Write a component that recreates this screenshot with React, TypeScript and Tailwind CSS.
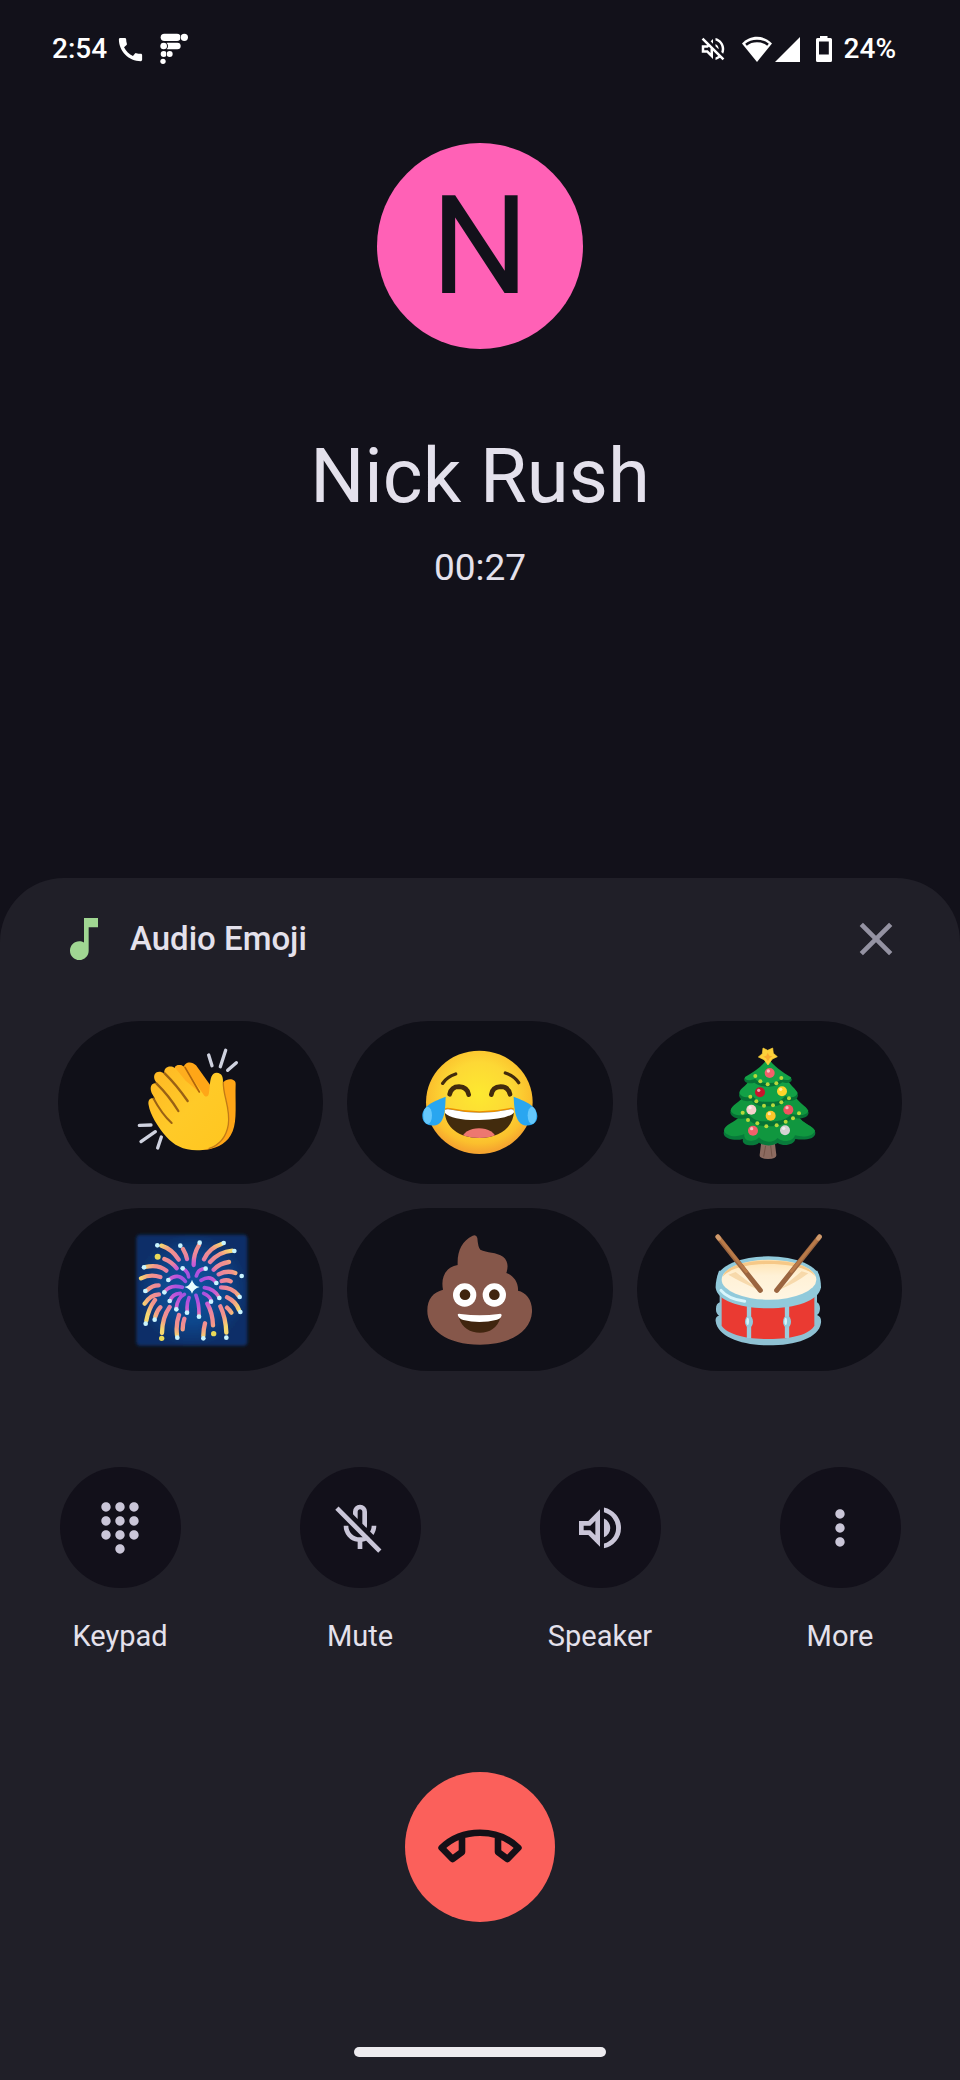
import React, { useState } from 'react'
import { MdCall, MdClose, MdDialpad, MdMoreVert, MdMusicNote, MdOutlineVolumeOff } from 'react-icons/md'

interface AudioEmoji {
  id: string
  label: string
  drawing: React.ReactNode
}

interface CallControl {
  id: string
  label: string
  icon: React.ReactNode
}

/* ---------- Status bar icons ---------- */

const NotificationIcon: React.FC = () => (
  <svg viewBox="480 99 87 96" className="h-8 w-[29px]" fill="white" aria-hidden="true">
    <rect x="482" y="101" width="60" height="22" rx="11" />
    <circle cx="553" cy="112" r="13" fill="#12111a" />
    <circle cx="553" cy="112" r="11" />
    <rect x="493" y="128" width="49" height="20" rx="10" />
    <circle cx="491" cy="138" r="13" fill="#12111a" />
    <circle cx="491" cy="138" r="10" />
    <circle cx="491" cy="162" r="9" />
    <circle cx="509" cy="162" r="11" fill="#12111a" />
    <circle cx="509" cy="162" r="9" />
    <circle cx="489" cy="184" r="8" />
  </svg>
)

const WifiIcon: React.FC = () => (
  <svg viewBox="0 0 30 26" className="h-[26px] w-[30px]" aria-hidden="true">
    <path d="M0 7.5C8-1.5 22-1.5 30 7.5L15 26Z" fill="white" />
    <path d="M4 8.8C10 3.8 20 3.8 26 8.8" fill="none" stroke="#12111a" strokeWidth="2.6" />
  </svg>
)

const SignalIcon: React.FC = () => (
  <svg viewBox="0 0 25 26" className="h-[26px] w-[25px]" aria-hidden="true">
    <path d="M25 1V26H0Z" fill="white" />
  </svg>
)

const BatteryIcon: React.FC = () => (
  <svg viewBox="0 0 16 26" className="h-[26px] w-4" aria-hidden="true">
    <path d="M4 0H11.5V2H14.5Q16 2 16 3.5V24.5Q16 26 14.5 26H1.5Q0 26 0 24.5V3.5Q0 2 1.5 2H4Z" fill="white" />
    <path d="M3 5.5H12.8V18.5H3Z" fill="#12111a" />
  </svg>
)

/* ---------- Call icons ---------- */

const MicOffIcon: React.FC = () => (
  <svg viewBox="0 -960 960 960" className="size-14" fill="currentColor" aria-hidden="true">
    <path d="M710-362l-58-58q14-23 21-48t7-52h80q0 44-13 83.5T710-362ZM592-482l-72-72v-206q0-17-11.5-28.5T480-800q-17 0-28.5 11.5T440-760v126l-80-80v-46q0-50 35-85t85-35q50 0 85 35t35 85v240q0 11-2.5 20t-5.5 18ZM440-120v-123q-104-14-172-93t-68-184h80q0 83 57.5 141.5T480-320q34 0 64.5-10.5T600-360l57 57q-29 23-63.5 39T520-243v123h-80Zm352 64L56-792l56-56 736 736-56 56Z" />
  </svg>
)

const SpeakerIcon: React.FC = () => (
  <svg viewBox="0 -960 960 960" className="size-14" fill="currentColor" aria-hidden="true">
    <path d="M548-131v-82q94-26 151-100t57-168q0-94-57-168T548-749v-82q128 28 210 125.5T840-481q0 127-82 224.5T548-131ZM120-360v-240h160l200-200v640L280-360H120Zm428 40v-322q51 22 79.500 66t28.500 96q0 51-28.500 94.500T548-320ZM400-606l-86 86H200v80h114l86 86v-252Z" />
  </svg>
)

const HangUpIcon: React.FC = () => (
  <svg viewBox="0 0 84 36" className="h-9 w-[84px]" fill="none" stroke="#141017" strokeWidth="6.6" strokeLinejoin="round" aria-hidden="true">
    <path d="M24 7V23L14.5 30L3.6 18.8Q19 3.7 42 3.7T80.4 18.8L69.5 30L60 23V7" />
  </svg>
)

/* ---------- Emoji drawings ---------- */

const ClapEmoji: React.FC = () => (
  <svg viewBox="242 97 360 360" className="size-[120px]" aria-hidden="true">
    <defs>
      <linearGradient id="clapFront" x1="0" y1="0" x2="1" y2="1">
        <stop offset="0" stopColor="#ffb624" />
        <stop offset=".5" stopColor="#ffca28" />
        <stop offset="1" stopColor="#ffc61f" />
      </linearGradient>
    </defs>
    <path d="M399 172C402 153 424 150 437 164L479 222L490 275L440 255Z" fill="#ffa617" />
    <path d="M520 214C530 202 557 203 556 220C554 275 561 328 547 362C533 396 505 412 470 417L440 417L505 340Z" fill="#ffa617" />
    <path d="M478 228C480 202 484 186 499 186C515 187 519 199 518 217C518 253 542 290 535 340C527 391 487 419 440 419C398 418 370 403 348 378C322 350 299 310 295 284C291 266 303 258 315 266L304 247C296 226 306 214 320 219L313 207C306 187 324 176 342 189C339 169 360 162 373 172C378 160 394 160 404 172L462 255Q473 263 476 246Z" fill="url(#clapFront)" />
    <path d="M373 170C382 160 395 160 404 172L450 248Q425 225 406 210Z" fill="#ffae1e" />
    <path d="M404 170L447 244" fill="none" stroke="#b0650c" strokeWidth="5" strokeLinecap="round" />
    <path d="M519 213C517 255 541 290 534 342C527 384 503 405 475 414" fill="none" stroke="#c27a16" strokeWidth="4" />
    <g fill="none" stroke="#996114" strokeLinecap="round">
      <path d="M343 188Q378 222 412 271" strokeWidth="7" />
      <path d="M318 218Q356 255 384 301" strokeWidth="7" />
      <path d="M310 264Q334 309 364 337" strokeWidth="6" />
    </g>
    <path d="M475 133L485 165M526 119L510 168M558 156L532 179M267 344L302 343M272 393L315 363M333 379L322 412" stroke="#cfd2df" strokeWidth="10" strokeLinecap="round" />
  </svg>
)

const JoyEmoji: React.FC = () => (
  <svg viewBox="240 97 360 360" className="size-[120px]" aria-hidden="true">
    <defs>
      <radialGradient id="joyFace" cx=".5" cy=".42" r=".56">
        <stop offset="0" stopColor="#fde930" />
        <stop offset=".55" stopColor="#fdd835" />
        <stop offset=".85" stopColor="#fbc02d" />
        <stop offset="1" stopColor="#f6a52f" />
      </radialGradient>
      <clipPath id="joyMouth">
        <path d="M314 302Q314 294 325 296Q418 316 511 296Q522 294 522 302C520 350 480 382 418 382S316 350 314 302Z" />
      </clipPath>
    </defs>
    <ellipse cx="418" cy="275" rx="160" ry="155" fill="url(#joyFace)" />
    <g fill="none" stroke="#422b0d" strokeLinecap="round">
      <path d="M308 218Q321 198 347 190M496 187Q523 196 536 216" strokeWidth="10" />
      <path d="M329 251Q334 228 357 228Q382 229 386 252M454 252Q457 229 482 228Q505 228 510 251" strokeWidth="14" />
    </g>
    <path d="M317 295Q321 293 325 294Q418 314 511 294Q515 293 519 295" fill="none" stroke="#eb8f00" strokeWidth="5" strokeLinecap="round" />
    <g clipPath="url(#joyMouth)">
      <rect x="310" y="290" width="215" height="95" fill="#422b0d" />
      <path d="M314 290H522V306Q500 327 418 328T314 306Z" fill="white" />
      <ellipse cx="417" cy="384" rx="50" ry="31" fill="#ed7770" />
    </g>
    <path d="M317 258C316 292 314 318 303 333C290 351 248 350 247 317C246 283 288 270 317 258Z" fill="#29a6f0" />
    <path d="M521 258C522 292 526 318 537 333C550 351 591 350 592 317C592 283 550 270 521 258Z" fill="#29a6f0" />
    <ellipse cx="263" cy="314" rx="13" ry="26" fill="#65c8fb" />
    <ellipse cx="576" cy="314" rx="13" ry="26" fill="#65c8fb" />
  </svg>
)

const treeLights = [
  [377, 196], [392, 212], [414, 221], [440, 218], [455, 202],
  [362, 258], [380, 272], [403, 285], [430, 284], [455, 275], [478, 263],
  [339, 306], [355, 328], [383, 338], [410, 347], [441, 344], [468, 333], [490, 323], [508, 308],
]

const treeBaubles = [
  { x: 420, y: 187, color: '#f2606a' },
  { x: 391, y: 245, color: '#c9142c' },
  { x: 457, y: 242, color: '#fbd52b' },
  { x: 365, y: 297, color: '#f5d0cc' },
  { x: 476, y: 297, color: '#f2525f' },
  { x: 423, y: 315, color: '#fbc72b' },
  { x: 370, y: 360, color: '#f2606a' },
  { x: 466, y: 359, color: '#d5d2d4' },
]

const TreeEmoji: React.FC = () => (
  <svg viewBox="238 97 360 360" className="size-[120px]" aria-hidden="true">
    <path d="M396 385H434L440 432Q442 444 415 445Q388 444 390 432Z" fill="#8d6b60" />
    <path d="M408 405L402 438M423 405L427 438" stroke="#735347" strokeWidth="3" />
    {/* Branches, bottom to top */}
    <path d="M332 318C315 340 284 345 282 366C281 387 322 391 340 385C333 407 376 409 388 396C402 407 430 407 444 397C462 409 495 402 497 385C522 389 558 387 557 366C555 345 520 340 505 318Z" fill="#087a3a" />
    <path d="M332 315C315 336 284 341 283 360C290 378 322 381 344 370C340 395 376 396 388 380C402 397 432 397 444 382C462 398 490 392 496 374C520 381 550 378 556 360C550 345 520 340 505 315Z" fill="#10973f" />
    <path d="M345 255C332 278 302 288 302 306C306 325 336 326 354 322C372 348 402 346 418 346C440 349 474 340 487 322C512 326 535 322 537 306C533 289 506 278 492 255Z" fill="#067335" />
    <path d="M345 252C332 275 303 283 303 300C312 317 338 316 356 309C375 335 402 332 418 332C440 334 470 329 485 310C510 316 533 314 536 300C530 286 506 275 492 252Z" fill="#10973f" />
    <path d="M362 205C355 230 329 237 328 254C331 273 352 273 366 270C382 289 398 287 415 287C437 289 455 285 467 269C486 274 504 269 505 254C503 238 480 230 472 205Z" fill="#067335" />
    <path d="M362 202C355 225 330 232 329 247C337 263 354 262 369 255C384 276 400 273 415 273C437 275 455 272 466 256C485 263 500 260 504 247C499 234 480 225 472 202Z" fill="#12a146" />
    <path d="M415 145C397 170 375 185 344 202C340 218 360 220 374 216C388 226 400 227 415 228C432 229 448 223 458 215C475 220 489 214 486 204C458 187 432 170 415 145Z" fill="#067335" />
    <path d="M415 142C397 167 375 182 346 199C344 210 360 211 376 204C390 217 400 217 415 217C432 218 446 214 456 205C471 211 487 207 484 200C458 184 432 167 415 142Z" fill="#12a146" />
    {treeLights.map(([x, y]) => (
      <circle key={`${x}-${y}`} cx={x} cy={y} r="6" fill="#b7d83c" />
    ))}
    {treeBaubles.map(({ x, y, color }) => (
      <g key={`${x}-${y}`}>
        <circle cx={x} cy={y} r="15" fill={color} />
        <circle cx={x - 4} cy={y - 6} r="5" fill="white" opacity=".6" />
      </g>
    ))}
    <path d="M400 112L414 119L429 112L431 128L443 138L428 145L415 163L403 147L386 139L398 129Z" fill="#fdd13a" stroke="#fdd13a" strokeWidth="2" strokeLinejoin="round" />
    <path d="M414 126L419 135L428 137L420 143L415 152L409 143L401 138L410 135Z" fill="#f79329" opacity=".6" />
  </svg>
)

const FireworksEmoji: React.FC = () => (
  <svg viewBox="242 88 360 360" className="size-[120px]" aria-hidden="true">
    <defs>
      <radialGradient id="nightSky">
        <stop offset="0" stopColor="#0c559f" />
        <stop offset=".6" stopColor="#0b458a" />
        <stop offset="1" stopColor="#0b2f68" />
      </radialGradient>
      <radialGradient id="sparks" gradientUnits="userSpaceOnUse" cx="425" cy="258" r="165">
        <stop offset="0" stopColor="#7a5be6" />
        <stop offset=".3" stopColor="#b550dc" />
        <stop offset=".45" stopColor="#cf62cf" />
        <stop offset=".55" stopColor="#ea839f" />
        <stop offset=".78" stopColor="#f3958a" />
        <stop offset=".95" stopColor="#f6d870" />
      </radialGradient>
      <filter id="skyEdge" x="-10%" y="-10%" width="120%" height="120%">
        <feGaussianBlur stdDeviation="4" />
      </filter>
    </defs>
    <rect x="258" y="102" width="333" height="333" rx="12" fill="url(#nightSky)" filter="url(#skyEdge)" />
    <g fill="none" stroke="url(#sparks)" strokeLinecap="round">
      {/* Outer trails */}
      <path strokeWidth="13" d="M333 135Q365 145 385 177M342 175Q365 184 379 203M284 199Q325 190 348 210M272 233Q300 219 330 229M290 269Q305 254 325 254M283 309Q300 282 326 281M288 360Q294 325 314 298M335 397Q336 350 358 319M380 404Q376 370 386 343M397 386Q397 368 402 354M459 405Q459 387 464 368M528 396Q526 350 510 317M488 374Q487 338 471 309M543 336Q538 328 530 321M566 328Q556 302 530 290M564 284Q546 260 512 260M541 242Q530 236 514 241M555 217Q530 208 505 221M536 184Q508 188 490 207M546 150Q507 153 479 184M514 130Q476 142 461 176M446 133Q429 161 430 193M398 145Q408 162 410 175M315 348Q320 330 330 320" />
      {/* Inner trails */}
      <path strokeWidth="11" d="M355 238Q382 214 405 242M397 203Q414 213 415 229M465 204Q443 205 438 226M496 245Q480 222 452 239M343 273Q360 250 396 260M360 300Q365 280 390 278M378 322Q382 290 402 281M411 332Q408 310 416 291M446 345Q447 310 437 284M483 300Q477 285 460 278M507 291Q492 264 462 261" />
    </g>
    <g fill="#c8f4ff">
      {[
        [321, 134], [390, 135], [448, 126], [520, 127], [552, 151], [574, 226], [568, 289], [570, 334],
        [528, 411], [459, 413], [381, 411], [286, 369], [313, 357], [285, 271], [281, 200], [354, 238],
        [397, 203], [466, 204], [498, 247], [507, 292], [482, 303], [446, 348], [410, 336], [378, 326],
        [358, 301], [342, 275],
      ].map(([cx, cy]) => (
        <circle key={`${cx}-${cy}`} cx={cx} cy={cy} r="7" />
      ))}
    </g>
    <circle cx="322" cy="168" r="9" fill="#eada58" />
    <circle cx="334" cy="413" r="8" fill="#eada58" />
    <circle cx="490" cy="399" r="8" fill="#eada58" />
    <path d="M425 237Q430 255 448 259Q430 264 425 279Q420 264 402 259Q420 255 425 237Z" fill="#e8fdff" />
  </svg>
)

const PoopEmoji: React.FC = () => (
  <svg viewBox="240 88 360 360" className="size-[120px]" aria-hidden="true">
    <path d="M398 105Q409 100 412 112Q414 140 421 147C440 157 470 154 489 168C505 180 505 200 499 217C520 224 536 244 534 270C558 275 578 298 576 334C573 390 515 432 420 432C320 432 262 386 262 330C262 293 280 275 309 267C302 232 315 200 353 193C351 150 366 121 398 105Z" fill="#86574a" />
    <circle cx="374" cy="283" r="35" fill="white" />
    <circle cx="463" cy="283" r="35" fill="white" />
    <circle cx="375" cy="282" r="16" fill="#40250f" />
    <circle cx="463" cy="282" r="16" fill="#40250f" />
    <path d="M357 352Q420 372 481 352C472 382 449 396 420 396S366 382 357 352Z" fill="#40250f" />
    <path d="M353 342Q354 338 362 340Q420 348 476 340Q485 337 485 344Q482 355 471 357Q420 371 370 358Q356 354 353 342Z" fill="white" />
  </svg>
)

const DrumEmoji: React.FC = () => (
  <svg viewBox="238 88 360 360" className="size-[120px]" aria-hidden="true">
    <defs>
      <linearGradient id="drumSkin" x1="0" y1="0" x2="0" y2="1">
        <stop offset="0" stopColor="#ffe2ae" />
        <stop offset=".4" stopColor="#fff1d6" />
        <stop offset="1" stopColor="#fff6e3" />
      </linearGradient>
    </defs>
    <path d="M258 362Q256 348 268 345Q258 338 259 324Q259 309 270 305V280H562V305Q571 310 571 324Q570 338 562 343Q576 348 574 366C568 412 498 434 416 434S264 408 258 362Z" fill="#8fc1d3" />
    <path d="M276 285H554V375C540 400 490 415 416 415S292 399 276 375Z" fill="#ea3a32" />
    <path d="M358 300V412M472 300V412" stroke="#9ccbdc" strokeWidth="13" />
    <ellipse cx="358" cy="363" rx="12" ry="18" fill="#92cadc" />
    <ellipse cx="472" cy="363" rx="12" ry="18" fill="#92cadc" />
    <ellipse cx="354" cy="362" rx="4" ry="11" fill="#d4f4fb" />
    <ellipse cx="468" cy="362" rx="4" ry="11" fill="#d4f4fb" />
    <path d="M268 210Q257 240 258 262C264 302 335 323 416 323S567 302 574 260Q574 232 563 210Z" fill="#91cadb" />
    <ellipse cx="416" cy="234" rx="153" ry="67" fill="#91cadb" />
    <ellipse cx="418" cy="237" rx="142" ry="60" fill="url(#drumSkin)" />
    <path d="M279 228C292 190 360 180 418 180S540 190 557 227C535 200 470 190 418 190S302 200 279 228Z" fill="#f6c887" />
    <path d="M318 214L388 268Q335 245 296 222ZM516 212L448 268Q500 246 536 218Z" fill="#f3cf98" opacity=".7" />
    <path d="M274 269Q294 294 345 302" fill="none" stroke="#d9f6fc" strokeWidth="9" strokeLinecap="round" />
    <g fill="none" strokeLinecap="round">
      <path d="M265 109L392 269M569 109L441 269" stroke="#9b6540" strokeWidth="15" />
      <path d="M268 110L350 213M567 110L485 212" stroke="#b97a48" strokeWidth="9" />
      <path d="M264 108L268 113M570 108L566 113" stroke="#cf9a6c" strokeWidth="13" />
    </g>
  </svg>
)

const audioEmojis: AudioEmoji[] = [
  { id: 'clap', label: 'Applause', drawing: <ClapEmoji /> },
  { id: 'joy', label: 'Laughter', drawing: <JoyEmoji /> },
  { id: 'tree', label: 'Christmas', drawing: <TreeEmoji /> },
  { id: 'fireworks', label: 'Fireworks', drawing: <FireworksEmoji /> },
  { id: 'poop', label: 'Poop', drawing: <PoopEmoji /> },
  { id: 'drum', label: 'Drum', drawing: <DrumEmoji /> },
]

const controls: CallControl[] = [
  { id: 'keypad', label: 'Keypad', icon: <MdDialpad className="size-14" /> },
  { id: 'mute', label: 'Mute', icon: <MicOffIcon /> },
  { id: 'speaker', label: 'Speaker', icon: <SpeakerIcon /> },
  { id: 'more', label: 'More', icon: <MdMoreVert className="size-14" /> },
]

const App: React.FC = () => {
  const [active, setActive] = useState<string | null>(null)

  const toggle = (id: string) => {
    setActive(prev => (prev === id ? null : id))
  }

  return (
    <div className="flex min-h-screen flex-col bg-[#12111a] font-['Roboto',sans-serif] text-[#e4e1ec]">
      {/* Status bar */}
      <header className="flex h-[98px] items-center justify-between pr-16 pl-[52px] text-[28px] leading-9 font-medium text-white">
        <div className="flex items-center">
          <span>2:54</span>
          <MdCall className="ml-2 size-[31px]" />
          <span className="ml-3.5">
            <NotificationIcon />
          </span>
        </div>
        <div className="flex items-center">
          <MdOutlineVolumeOff className="mr-3.5 size-[30px]" />
          <WifiIcon />
          <span className="ml-[3px]">
            <SignalIcon />
          </span>
          <span className="mr-3 ml-4">
            <BatteryIcon />
          </span>
          <span>24%</span>
        </div>
      </header>

      {/* Caller */}
      <section className="flex flex-1 flex-col items-center pt-[45px] pb-16">
        <div className="flex size-[206px] items-center justify-center rounded-full bg-[#ff61b6] text-[138px] leading-none text-[#12111a]">
          N
        </div>
        <h1 className="mt-[79px] text-[76px] leading-24">Nick Rush</h1>
        <p className="mt-[22px] text-[37px] leading-11">00:27</p>
      </section>

      {/* Bottom sheet */}
      <main className="rounded-t-[64px] bg-[#201f28] pt-[33px] pb-[23px]">
        <div className="flex items-center px-14">
          <MdMusicNote className="size-14 text-[#a0d692]" />
          <h2 className="ml-[18px] flex-1 text-[33px] leading-10 font-medium">Audio Emoji</h2>
          <button aria-label="Close" className="text-[#9492a2]">
            <MdClose className="size-14" />
          </button>
        </div>

        <div className="mt-[54px] grid grid-cols-3 gap-6 px-[58px]">
          {audioEmojis.map(emoji => (
            <button
              key={emoji.id}
              aria-label={emoji.label}
              className="flex h-[163px] items-center justify-center rounded-full bg-[#101018]"
            >
              {emoji.drawing}
            </button>
          ))}
        </div>

        <div className="mt-24 grid grid-cols-4">
          {controls.map(control => (
            <button
              key={control.id}
              aria-pressed={active === control.id}
              onClick={() => toggle(control.id)}
              className="flex flex-col items-center"
            >
              <span className="flex size-[121px] items-center justify-center rounded-full bg-[#12101a] text-[#cac6d8]">
                {control.icon}
              </span>
              <span className="mt-[30px] text-[29px] leading-9">{control.label}</span>
            </button>
          ))}
        </div>

        <div className="mt-[118px] flex justify-center">
          <button
            aria-label="End call"
            className="flex size-[150px] items-center justify-center rounded-full bg-[#fb605b]"
          >
            <HangUpIcon />
          </button>
        </div>

        {/* Gesture bar */}
        <div className="mx-auto mt-[125px] h-2.5 w-[252px] rounded-full bg-[#edebef]" />
      </main>
    </div>
  )
}

export default App
